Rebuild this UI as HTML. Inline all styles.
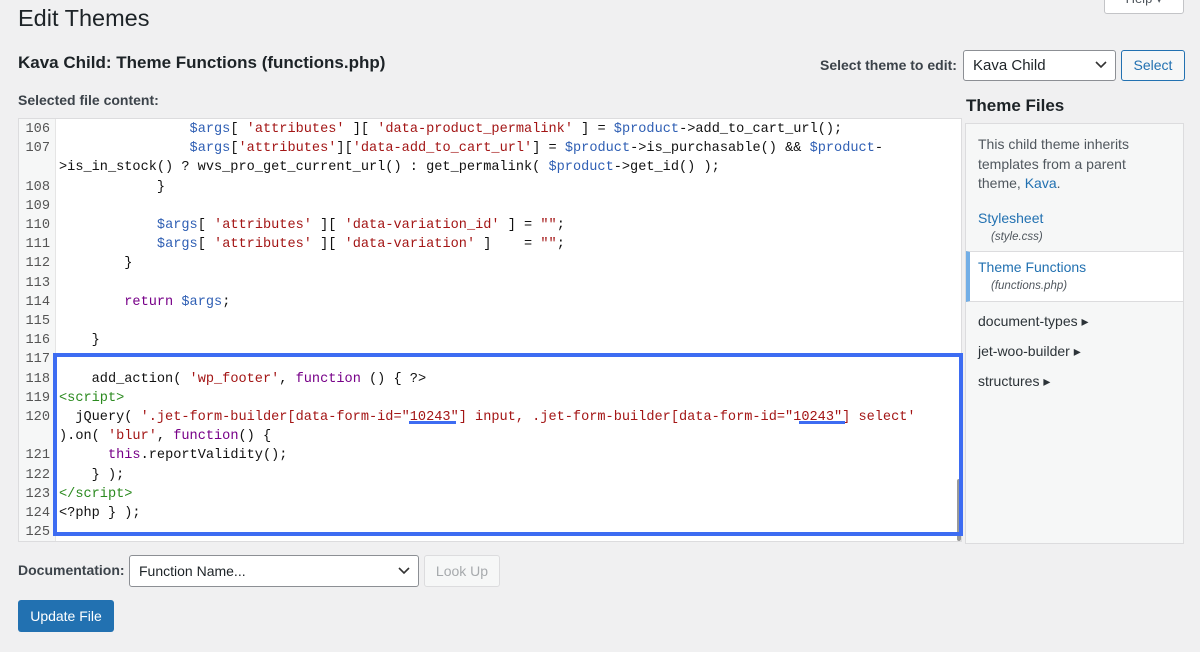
<!DOCTYPE html>
<html><head><meta charset="utf-8"><style>
body{margin:0;width:1200px;height:652px;background:#f0f0f1;font-family:"Liberation Sans",sans-serif;color:#1d2327;position:relative;overflow:hidden}
.a{position:absolute}
h1{position:absolute;left:18px;top:5px;margin:0;font-size:23.5px;font-weight:400}
.code{position:absolute;left:18px;top:118px;width:944px;height:424px;background:#fff;border:1px solid #dcdcde;overflow:hidden;box-sizing:border-box}
.gut{position:absolute;left:0;top:0;width:36px;height:100%;background:#f6f7f7;border-right:1px solid #e5e5e5}
.ln{position:absolute;left:0;width:31px;text-align:right;font:13.6px/19.2px "Liberation Mono",monospace;color:#555}
.cl{position:absolute;left:40px;font:13.6px/19.2px "Liberation Mono",monospace;color:#111;white-space:pre}
.v{color:#2f5fb4}.s{color:#a31515}.k{color:#770088}.t{color:#2b8a1f}
.files{position:absolute;left:965px;top:123px;width:219px;height:421px;background:#f6f7f7;border:1px solid #dcdcde;box-sizing:border-box;font-size:14px;color:#50575e}
.blue{color:#2271b1}
.btn{position:absolute;box-sizing:border-box;border-radius:3px;font-size:14px;text-align:center}
</style></head><body>
<h1>Edit Themes</h1>
<div class="btn" style="left:1104px;top:-10px;width:80px;height:24px;border:1px solid #c3c4c7;background:#fff;color:#50575e;line-height:16px;font-size:13px">Help ▾</div>
<div class="a" style="left:18px;top:53px;font-size:17px;font-weight:700">Kava Child: Theme Functions (functions.php)</div>
<div class="a" style="left:820px;top:57px;font-size:14px;font-weight:700;color:#3c434a">Select theme to edit:</div>
<div class="btn" style="left:963px;top:50px;width:153px;height:31px;border:1px solid #8c8f94;background:#fff;text-align:left;padding:6px 9px;font-size:15px">Kava Child<svg class="a" style="right:8px;top:10px" width="12" height="8"><path d="M1 1l5 5 5-5" fill="none" stroke="#333" stroke-width="1.6"/></svg></div>
<div class="btn" style="left:1121px;top:50px;width:64px;height:31px;border:1px solid #2271b1;background:#f6f7f7;color:#2271b1;line-height:29px">Select</div>
<div class="a" style="left:18px;top:92px;font-size:14px;font-weight:700;color:#3c434a">Selected file content:</div>
<div class="a" style="left:966px;top:96px;font-size:17px;font-weight:700">Theme Files</div>
<div class="code"><div class="gut"></div>
<div style="position:absolute;left:0;top:1px">
<div class="ln" style="top:0">106</div><div class="cl" style="top:0">                <span class="v">$args</span>[ <span class="s">'attributes'</span> ][ <span class="s">'data-product_permalink'</span> ] = <span class="v">$product</span>-&gt;add_to_cart_url();</div>
<div class="ln" style="top:19.2px">107</div><div class="cl" style="top:19.2px">                <span class="v">$args</span>[<span class="s">'attributes'</span>][<span class="s">'data-add_to_cart_url'</span>] = <span class="v">$product</span>-&gt;is_purchasable() &amp;&amp; <span class="v">$product</span>-</div>
<div class="cl" style="top:38.4px">&gt;is_in_stock() ? wvs_pro_get_current_url() : get_permalink( <span class="v">$product</span>-&gt;get_id() );</div>
<div class="ln" style="top:57.6px">108</div><div class="cl" style="top:57.6px">            }</div>
<div class="ln" style="top:76.8px">109</div>
<div class="ln" style="top:96px">110</div><div class="cl" style="top:96px">            <span class="v">$args</span>[ <span class="s">'attributes'</span> ][ <span class="s">'data-variation_id'</span> ] = <span class="s">""</span>;</div>
<div class="ln" style="top:115.2px">111</div><div class="cl" style="top:115.2px">            <span class="v">$args</span>[ <span class="s">'attributes'</span> ][ <span class="s">'data-variation'</span> ]    = <span class="s">""</span>;</div>
<div class="ln" style="top:134.4px">112</div><div class="cl" style="top:134.4px">        }</div>
<div class="ln" style="top:153.6px">113</div>
<div class="ln" style="top:172.8px">114</div><div class="cl" style="top:172.8px">        <span class="k">return</span> <span class="v">$args</span>;</div>
<div class="ln" style="top:192px">115</div>
<div class="ln" style="top:211.2px">116</div><div class="cl" style="top:211.2px">    }</div>
<div class="ln" style="top:230.4px">117</div>
<div class="ln" style="top:249.6px">118</div><div class="cl" style="top:249.6px">    add_action( <span class="s">'wp_footer'</span>, <span class="k">function</span> () { ?&gt;</div>
<div class="ln" style="top:268.8px">119</div><div class="cl t" style="top:268.8px">&lt;script&gt;</div>
<div class="ln" style="top:288px">120</div><div class="cl" style="top:288px">  jQuery( <span class="s">'.jet-form-builder[data-form-id="10243"] input, .jet-form-builder[data-form-id="10243"] select'</span></div>
<div class="cl" style="top:307.2px">).on( <span class="s">'blur'</span>, <span class="k">function</span>() {</div>
<div class="ln" style="top:326.4px">121</div><div class="cl" style="top:326.4px">      <span class="k">this</span>.reportValidity();</div>
<div class="ln" style="top:345.6px">122</div><div class="cl" style="top:345.6px">    } );</div>
<div class="ln" style="top:364.8px">123</div><div class="cl t" style="top:364.8px">&lt;/script&gt;</div>
<div class="ln" style="top:384px">124</div><div class="cl" style="top:384px">&lt;?php } );</div>
<div class="ln" style="top:403.2px">125</div>
</div>
<div class="a" style="right:0;top:360px;width:4px;height:62px;background:#999;border-radius:2px"></div>
</div>
<div class="a" style="left:53px;top:353px;width:910px;height:183px;border:4px solid #3d6cf2;box-sizing:border-box"></div>
<div class="a" style="left:409px;top:421px;width:47px;height:3px;background:#3d6cf2"></div>
<div class="a" style="left:799px;top:421px;width:46px;height:3px;background:#3d6cf2"></div>
<div class="files">
<div class="a" style="left:12px;top:11px;width:190px;line-height:19.5px">This child theme inherits templates from a parent theme, <span class="blue">Kava</span>.</div>
<div class="a blue" style="left:12px;top:86px">Stylesheet</div>
<div class="a" style="left:25px;top:107px;font-size:11.5px;font-style:italic">(style.css)</div>
<div class="a" style="left:0;top:127px;width:217px;height:51px;background:#fff;border-top:1px solid #dcdcde;border-bottom:1px solid #dcdcde;border-left:4px solid #72aee6;box-sizing:border-box"></div>
<div class="a blue" style="left:12px;top:135px">Theme Functions</div>
<div class="a" style="left:25px;top:156px;font-size:11.5px;font-style:italic">(functions.php)</div>
<div class="a" style="left:12px;top:189px;color:#2c3338">document-types ▸</div>
<div class="a" style="left:12px;top:219px;color:#2c3338">jet-woo-builder ▸</div>
<div class="a" style="left:12px;top:249px;color:#2c3338">structures ▸</div>
</div>
<div class="a" style="left:18px;top:562px;font-size:14px;font-weight:700;color:#3c434a">Documentation:</div>
<div class="btn" style="left:129px;top:555px;width:290px;height:32px;border:1px solid #8c8f94;background:#fff;text-align:left;padding:7px 9px">Function Name...<svg class="a" style="right:8px;top:11px" width="12" height="8"><path d="M1 1l5 5 5-5" fill="none" stroke="#333" stroke-width="1.6"/></svg></div>
<div class="btn" style="left:424px;top:555px;width:76px;height:32px;border:1px solid #dcdcde;background:#f6f7f7;color:#a7aaad;line-height:30px">Look Up</div>
<div class="btn" style="left:18px;top:600px;width:96px;height:32px;background:#2271b1;color:#fff;line-height:32px">Update File</div>
</body></html>
